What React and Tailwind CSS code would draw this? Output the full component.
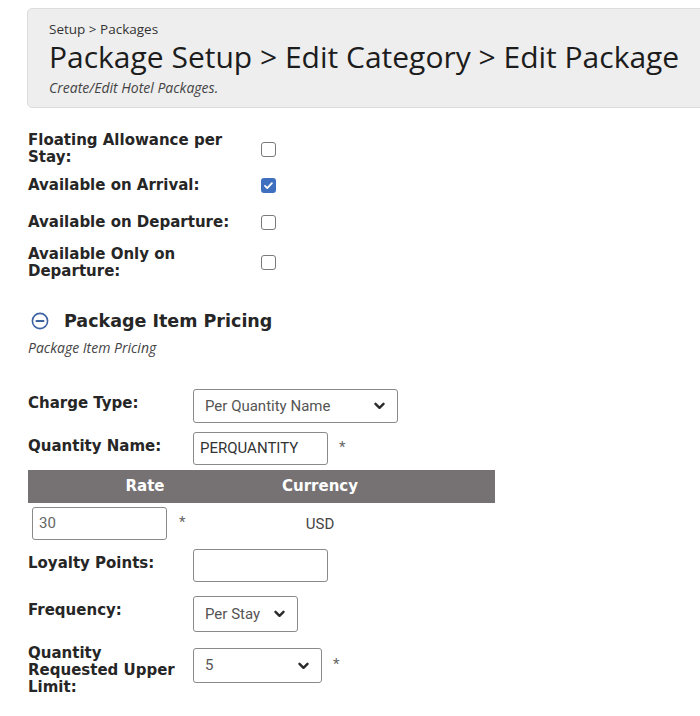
import React from 'react';

const labelFont = "font-['DejaVu_Sans',sans-serif]";
const inputFont = "font-['Roboto','Liberation_Sans',sans-serif]";

const Checkbox = ({ checked }) => (
    <div
        className={
            checked
                ? 'w-[15px] h-[15px] rounded-[3px] bg-[#3f6fbf] flex items-center justify-center'
                : 'w-[15px] h-[15px] rounded-[3px] border-[1.5px] border-[#7a7a7a] bg-white'
        }
    >
        {checked && (
            <svg width="11" height="11" viewBox="0 0 12 12">
                <path d="M2.2 6.3l2.5 2.5 5-5.4" fill="none" stroke="white" strokeWidth="2" strokeLinecap="round" strokeLinejoin="round" />
            </svg>
        )}
    </div>
);

const Chevron = () => (
    <svg width="11" height="8" viewBox="0 0 11 8">
        <path d="M1.5 1.8l4 4 4-4" fill="none" stroke="#2b2b2b" strokeWidth="2.4" strokeLinecap="round" strokeLinejoin="round" />
    </svg>
);

const Select = ({ value, width, height }) => (
    <div
        className={`${width} ${height} border border-[#8a8a8a] rounded-[3px] bg-white flex items-center justify-between pl-[11px] pr-[12px] ${inputFont} text-[15px] text-[#555]`}
    >
        <span>{value}</span>
        <Chevron />
    </div>
);

const TextBox = ({ value, color = 'text-[#444]' }) => (
    <div className={`w-[135px] h-[33px] border border-[#8a8a8a] rounded-[3px] bg-white flex items-center pl-[6px] ${inputFont} text-[15px] ${color}`}>
        {value}
    </div>
);

const Star = () => <span className={`${inputFont} text-[15px] text-[#666] leading-none`}>*</span>;

const checkRows = [
    { label: 'Floating Allowance per Stay:', checked: false, h: 'h-[36px]' },
    { label: 'Available on Arrival:', checked: true, h: 'h-[37px]' },
    { label: 'Available on Departure:', checked: false, h: 'h-[36px]' },
    { label: 'Available Only on Departure:', checked: false, h: 'h-[45px]' },
];

const FormLabel = ({ children }) => (
    <div className={`w-[165px] shrink-0 ${labelFont} font-bold text-[15px] leading-[17px] text-[#262626]`}>{children}</div>
);

export default function App() {
    return (
        <div className="w-[700px] h-[716px] overflow-hidden bg-white">
            <div className="pt-[8px] pl-[27px]">
                <div className="w-[700px] h-[100px] bg-[#eeeeee] border border-[#dcdcdc] rounded-[5px] pl-[21px] pt-[12px] font-['Open_Sans',sans-serif] text-[#1c1c1c]">
                    <div className="text-[13.5px] leading-[16px] text-[#333]">Setup &gt; Packages</div>
                    <h1 className="text-[30px] leading-[40px] whitespace-nowrap text-[#1c1c1c]">
                        Package Setup &gt; Edit Category &gt; Edit Package
                    </h1>
                    <div className="mt-[3px] text-[14px] leading-[16px] italic text-[#444]">Create/Edit Hotel Packages.</div>
                </div>
            </div>

            <div className="pl-[28px] mt-[23px]">
                {checkRows.map((row) => (
                    <div key={row.label} className={`flex items-center ${row.h}`}>
                        <div className={`w-[205px] ${labelFont} font-bold text-[15px] leading-[17px] text-[#262626]`}>{row.label}</div>
                        <div className="ml-[28px]">
                            <Checkbox checked={row.checked} />
                        </div>
                    </div>
                ))}

                <div className="mt-[24px] flex items-center h-[24px] -ml-[1px]">
                    <svg width="18" height="18" viewBox="0 0 18 18" className="ml-[4px]">
                        <circle cx="9" cy="9" r="7.6" fill="none" stroke="#3d63a3" strokeWidth="1.6" />
                        <path d="M5.4 9h7.2" stroke="#3d63a3" strokeWidth="1.8" strokeLinecap="round" />
                    </svg>
                    <h2 className={`ml-[15px] ${labelFont} font-bold text-[17.5px] text-[#262626]`}>Package Item Pricing</h2>
                </div>
                <div className="mt-[7px] font-['Open_Sans',sans-serif] italic text-[14px] leading-[16px] text-[#444]">
                    Package Item Pricing
                </div>

                <div className="mt-[33px] flex flex-col">
                    <div className="flex items-start">
                        <FormLabel>
                            <div className="pt-[6px]">Charge Type:</div>
                        </FormLabel>
                        <Select value="Per Quantity Name" width="w-[205px]" height="h-[34px]" />
                    </div>

                    <div className="mt-[9px] flex items-start">
                        <FormLabel>
                            <div className="pt-[6px]">Quantity Name:</div>
                        </FormLabel>
                        <TextBox value="PERQUANTITY" color="text-[#333]" />
                        <div className="ml-[11px] pt-[2px]">
                            <Star />
                        </div>
                    </div>

                    <div className={`mt-[5px] w-[467px] h-[33px] bg-[#767274] grid grid-cols-[234px_116px_1fr] items-center ${labelFont} font-bold text-[15px] text-white`}>
                        <div className="text-center">Rate</div>
                        <div className="text-center">Currency</div>
                        <div />
                    </div>

                    <div className="mt-[4px] w-[467px] grid grid-cols-[234px_116px_1fr] items-center">
                        <div className="flex items-start pl-[4px]">
                            <TextBox value="30" color="text-[#666]" />
                            <div className="ml-[12px] pt-[2px]">
                                <Star />
                            </div>
                        </div>
                        <div className={`text-center ${inputFont} text-[15px] text-[#444] pt-[2px]`}>USD</div>
                        <div />
                    </div>

                    <div className="mt-[9px] flex items-start">
                        <FormLabel>
                            <div className="pt-[6px]">Loyalty Points:</div>
                        </FormLabel>
                        <TextBox value="" />
                    </div>

                    <div className="mt-[14px] flex items-start">
                        <FormLabel>
                            <div className="pt-[6px]">Frequency:</div>
                        </FormLabel>
                        <Select value="Per Stay" width="w-[105px]" height="h-[36px]" />
                    </div>

                    <div className="mt-[13px] flex items-center">
                        <FormLabel>
                            Quantity
                            <br />
                            Requested Upper
                            <br />
                            Limit:
                        </FormLabel>
                        <div className="flex items-start mb-[10px]">
                            <Select value="5" width="w-[129px]" height="h-[35px]" />
                            <div className="ml-[11px] pt-[3px]">
                                <Star />
                            </div>
                        </div>
                    </div>
                </div>
            </div>
        </div>
    );
}
